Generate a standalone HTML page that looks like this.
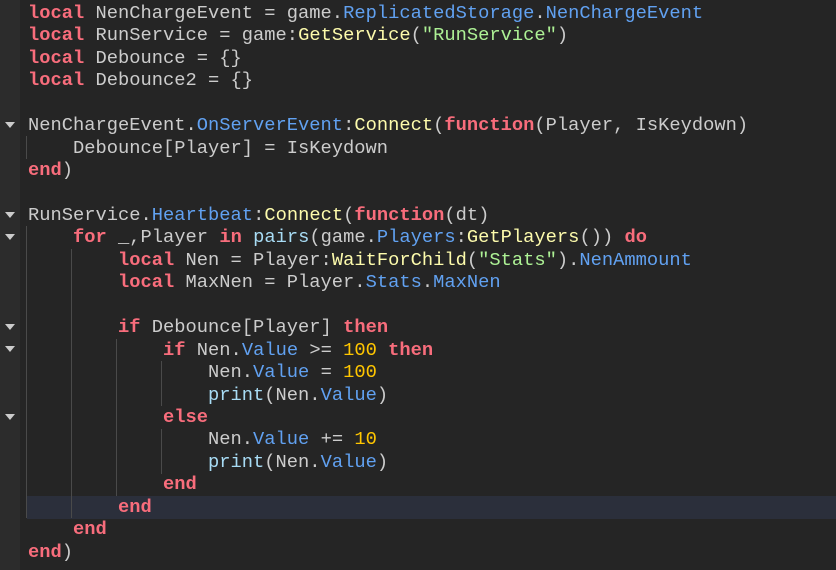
<!DOCTYPE html>
<html><head><style>
html,body{margin:0;padding:0;background:#252525;width:836px;height:570px;overflow:hidden}
.g{position:absolute;left:0;top:0;width:20px;height:570px;background:#2c2c2c}
.code{position:absolute;left:28px;top:1.8px;font-family:"Liberation Mono",monospace;font-size:18.75px;line-height:22.45px;color:#cccccc;white-space:pre;letter-spacing:0}
.k{color:#f86d7c;font-weight:bold}
.p{color:#61a1f1}
.m{color:#fdfbac}
.s{color:#adf195}
.n{color:#ffc600}
.b{color:#a8dcf5}
.hl{position:absolute;left:27px;top:496px;width:809px;height:22.5px;background:#2b2f3b}
.v{position:absolute;width:1px;background:#4a4a4a}
.t{position:absolute;left:5px;width:0;height:0;border-left:5px solid transparent;border-right:5px solid transparent;border-top:6px solid #cccccc}
</style></head><body>
<div class="g"></div>
<div class="hl"></div>
<div class="v" style="left:26px;top:136px;height:23px"></div>
<div class="v" style="left:26px;top:226px;height:292px"></div>
<div class="v" style="left:71px;top:249px;height:269px"></div>
<div class="v" style="left:116px;top:339px;height:157px"></div>
<div class="v" style="left:161px;top:361px;height:45px"></div>
<div class="v" style="left:161px;top:429px;height:45px"></div>
<div class="t" style="top:122px"></div>
<div class="t" style="top:212px"></div>
<div class="t" style="top:234px"></div>
<div class="t" style="top:324px"></div>
<div class="t" style="top:346px"></div>
<div class="t" style="top:414px"></div>
<div class="code"><span class="k">local</span> NenChargeEvent = game.<span class="p">ReplicatedStorage</span>.<span class="p">NenChargeEvent</span>
<span class="k">local</span> RunService = game:<span class="m">GetService</span>(<span class="s">"RunService"</span>)
<span class="k">local</span> Debounce = {}
<span class="k">local</span> Debounce2 = {}

NenChargeEvent.<span class="p">OnServerEvent</span>:<span class="m">Connect</span>(<span class="k">function</span>(Player, IsKeydown)
    Debounce[Player] = IsKeydown
<span class="k">end</span>)

RunService.<span class="p">Heartbeat</span>:<span class="m">Connect</span>(<span class="k">function</span>(dt)
    <span class="k">for</span> _,Player <span class="k">in</span> <span class="b">pairs</span>(game.<span class="p">Players</span>:<span class="m">GetPlayers</span>()) <span class="k">do</span>
        <span class="k">local</span> Nen = Player:<span class="m">WaitForChild</span>(<span class="s">"Stats"</span>).<span class="p">NenAmmount</span>
        <span class="k">local</span> MaxNen = Player.<span class="p">Stats</span>.<span class="p">MaxNen</span>

        <span class="k">if</span> Debounce[Player] <span class="k">then</span>
            <span class="k">if</span> Nen.<span class="p">Value</span> &gt;= <span class="n">100</span> <span class="k">then</span>
                Nen.<span class="p">Value</span> = <span class="n">100</span>
                <span class="b">print</span>(Nen.<span class="p">Value</span>)
            <span class="k">else</span>
                Nen.<span class="p">Value</span> += <span class="n">10</span>
                <span class="b">print</span>(Nen.<span class="p">Value</span>)
            <span class="k">end</span>
        <span class="k">end</span>
    <span class="k">end</span>
<span class="k">end</span>)</div>
</body></html>
